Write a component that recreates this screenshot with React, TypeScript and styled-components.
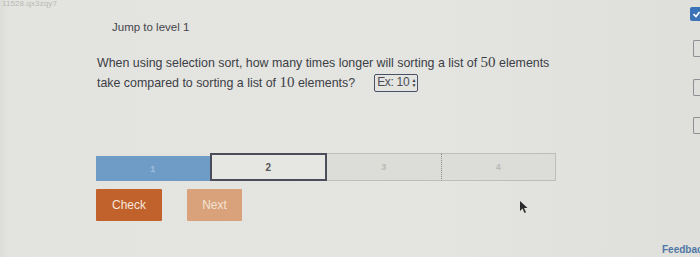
import React from "react";
import styled, { createGlobalStyle } from "styled-components";

const Global = createGlobalStyle`
  html, body { margin: 0; padding: 0; }
  body {
    width: 700px; height: 257px; overflow: hidden;
    background: #e2e2de;
    font-family: "Liberation Sans", Arial, sans-serif;
  }
`;

const Page = styled.div`
  position: relative;
  width: 700px;
  height: 257px;
  display: flex;
  background: linear-gradient(90deg, #dcdcd8 0px, #e3e3df 8px, #e4e4e0 60%, #dfdfdb 100%);
  overflow: hidden;
`;

const Crumb = styled.div`
  position: absolute;
  left: 2px;
  top: -1px;
  font-size: 8px;
  color: #b9bab6;
  letter-spacing: 0.1px;
`;

const Main = styled.div`
  flex: 1;
  display: flex;
  flex-direction: column;
  padding: 20px 0 0 96px;
`;

const Jump = styled.div`
  margin-left: 16px;
  font-size: 11.5px;
  color: #44464d;
  line-height: 14px;
`;

const Question = styled.div`
  margin-top: 19px;
  margin-left: 1px;
  font-size: 12.4px;
  line-height: 19px;
  color: #3b3e46;
  white-space: nowrap;
`;

const Num = styled.span`
  font-family: "Liberation Serif", "Times New Roman", serif;
  font-size: 15px;
`;

const ExBox = styled.span`
  display: inline-flex;
  align-items: center;
  box-sizing: border-box;
  margin-left: 19px;
  height: 18px;
  padding: 0 1px 0 2px;
  border: 1.5px solid #4a5166;
  border-radius: 2px;
  font-size: 12px;
  letter-spacing: -0.3px;
  color: #4a4d58;
  vertical-align: middle;
  white-space: nowrap;
  position: relative;
  top: -1px;
`;

const Spin = styled.span`
  display: inline-flex;
  flex-direction: column;
  margin-left: 2px;
  font-size: 5px;
  line-height: 5px;
  color: #3a3d48;
`;

const Bar = styled.div`
  margin-top: 60px;
  width: 460px;
  height: 28px;
  display: flex;
`;

const Seg = styled.div<{ $kind: "done" | "current" | "todo"; $dotted?: boolean }>`
  flex: 1;
  box-sizing: border-box;
  display: flex;
  align-items: center;
  justify-content: center;
  font-size: 9px;
  font-weight: bold;
  ${(p) =>
    p.$kind === "done"
      ? `background: #6f9cc6; color: #9dbddb; border-top: 3px solid #e2e2de;`
      : p.$kind === "current"
      ? `background: #e6e6e2; color: #555; border: 2px solid #4b4e5a; font-size: 10px;`
      : `background: #dcdcd8; color: #b9b9b5; border-top: 1px solid #bdbdb9; border-bottom: 1px solid #bdbdb9; border-right: 1px solid #bdbdb9;`}
  ${(p) => (p.$dotted ? `border-right: 1px dotted #8a8a86;` : ``)}
`;

const Buttons = styled.div`
  margin-top: 8px;
  display: flex;
  gap: 25px;
`;

const Btn = styled.div<{ $light?: boolean }>`
  height: 32px;
  width: ${(p) => (p.$light ? "55px" : "66px")};
  display: flex;
  align-items: center;
  justify-content: center;
  font-size: 12px;
  color: ${(p) => (p.$light ? "#f3e2d3" : "#f6e6dc")};
  background: ${(p) => (p.$light ? "#d9a27a" : "#c1622c")};
  border-radius: 1px;
`;

const Cursor = styled.svg`
  position: absolute;
  left: 519px;
  top: 200px;
`;

const Side = styled.div`
  width: 10px;
  display: flex;
  flex-direction: column;
  align-items: flex-end;
  padding-top: 7px;
`;

const Tick = styled.div`
  width: 10px;
  height: 14px;
  background: #3b72b8;
  display: flex;
  align-items: center;
  justify-content: flex-end;
  border-radius: 2px 0 0 2px;
`;

const Box = styled.div<{ $top: number }>`
  margin-top: ${(p) => p.$top}px;
  width: 6px;
  height: 15px;
  border: 1.5px solid #8e9096;
  border-right: none;
  border-radius: 2px 0 0 2px;
`;

const Feedback = styled.div`
  position: absolute;
  left: 662px;
  bottom: 2px;
  font-size: 10px;
  font-weight: bold;
  color: #4f77a6;
  white-space: nowrap;
`;

export default function App() {
  return (
    <>
      <Global />
      <Page>
        <Crumb>11528.qx3zqy7</Crumb>
        <Main>
          <Jump>Jump to level 1</Jump>
          <Question>
            When using selection sort, how many times longer will sorting a list of <Num>50</Num> elements
            <br />
            take compared to sorting a list of <Num>10</Num> elements?
            <ExBox>
              Ex: 10
              <Spin>
                <span>▲</span>
                <span>▼</span>
              </Spin>
            </ExBox>
          </Question>
          <Bar>
            <Seg $kind="done">1</Seg>
            <Seg $kind="current">2</Seg>
            <Seg $kind="todo" $dotted>3</Seg>
            <Seg $kind="todo">4</Seg>
          </Bar>
          <Buttons>
            <Btn>Check</Btn>
            <Btn $light>Next</Btn>
          </Buttons>
        </Main>
        <Side>
          <Tick>
            <svg width="7" height="7" viewBox="0 0 7 7">
              <path d="M0.5 3 L3 5.5 L6.5 1" stroke="#fff" strokeWidth="1.6" fill="none" />
            </svg>
          </Tick>
          <Box $top={19} />
          <Box $top={22} />
          <Box $top={21} />
        </Side>
        <Cursor width="10" height="14" viewBox="0 0 10 14">
          <path d="M1 1 L1 11 L3.5 8.5 L5.5 13 L7 12.3 L5 8 L8.5 8 Z" fill="#2a2a2a" />
        </Cursor>
        <Feedback>Feedback</Feedback>
      </Page>
    </>
  );
}
